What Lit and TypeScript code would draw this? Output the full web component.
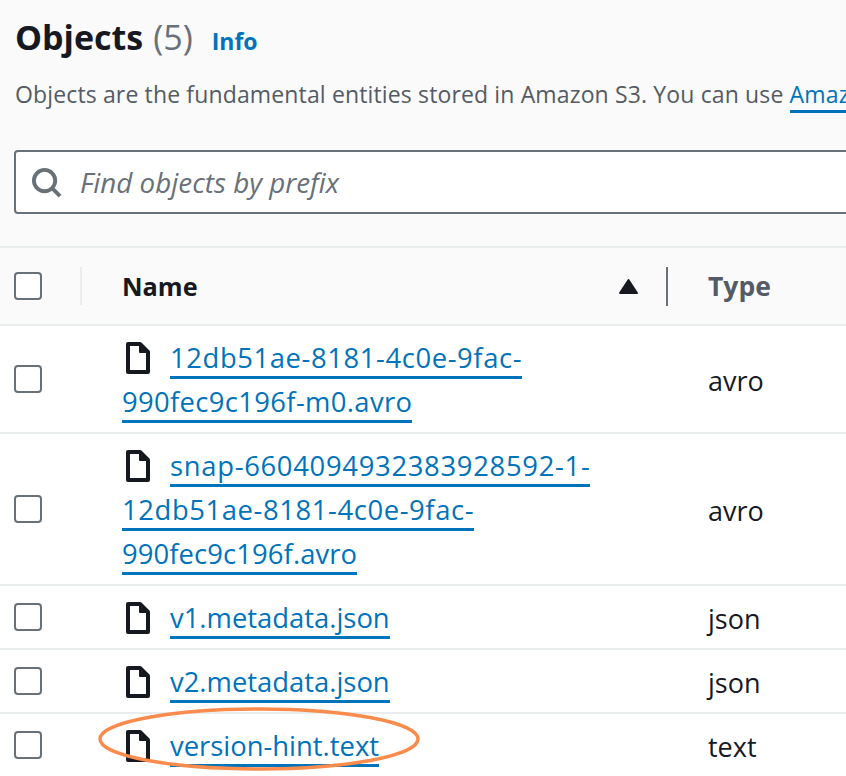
import {LitElement, html, css} from 'lit';
import {customElement} from 'lit/decorators.js';

// the screenshot's digits run wider than Open Sans, so digit heavy lines get a bit of tracking
const rows = [
  {lines: [['12db51ae-8181-4c0e-9fac-', 0.6], ['990fec9c196f-m0.avro', 0.35]], type: 'avro'},
  {lines: [['snap-6604094932383928592-1-', 0.7], ['12db51ae-8181-4c0e-9fac-', 0.6], ['990fec9c196f.avro', 0.1]], type: 'avro'},
  {lines: [['v1.metadata.json', 0]], type: 'json'},
  {lines: [['v2.metadata.json', 0]], type: 'json'},
  {lines: [['version-hint.text', 0]], type: 'text'},
];

const fileIcon = html`<svg class="file" viewBox="0 0 24 32" width="24" height="32">
  <path d="M2 2h12l8 8v20H2z" fill="#fff" stroke="#16191f" stroke-width="4" stroke-linejoin="round"></path>
  <path d="M14 2l8 8h-8z" fill="#16191f" stroke="#16191f" stroke-width="2" stroke-linejoin="round"></path>
</svg>`;

@customElement('app-root')
export class AppRoot extends LitElement {
  static styles = css`
    :host {
      display: block;
      position: relative;
      height: 776px;
      overflow: hidden;
      background: #fafafa;
      font-family: 'Open Sans', 'Noto Sans', sans-serif;
      color: #16191f;
    }
    .head {
      padding: 12px 0 0 15px;
      white-space: nowrap;
    }
    h1 {
      margin: 0;
      font-size: 34px;
      line-height: 50px;
      font-weight: 700;
      display: flex;
      align-items: baseline;
    }
    .count {
      color: #687078;
      font-weight: 400;
      margin-left: 10px;
    }
    .info {
      color: #0073bb;
      font-size: 23px;
      font-weight: 700;
      margin-left: 19px;
    }
    .desc {
      margin: 8px 0 0;
      color: #545b64;
      font-size: 23px;
      line-height: 40px;
      letter-spacing: 0.14px;
    }
    .desc a {
      color: #0073bb;
      text-decoration: none;
      border-bottom: 3px solid #0073bb;
    }
    .search {
      margin: 36px -20px 0 14px;
      height: 64px;
      box-sizing: border-box;
      border: 2px solid #687078;
      border-radius: 4px;
      background: #fff;
      display: flex;
      align-items: center;
      padding-left: 15px;
      gap: 18px;
      color: #687078;
      font-size: 27.8px;
      font-style: italic;
    }
    .table {
      margin-top: 32px;
      border-top: 2px solid #eaeded;
    }
    .row {
      display: grid;
      grid-template-columns: 122px 546px 1fr;
      border-bottom: 2px solid #eaeded;
      background: #fff;
    }
    .row.th {
      background: #fafafa;
      box-sizing: border-box;
      height: 78px;
      font-weight: 700;
      font-size: 25.3px;
    }
    .cell {
      display: flex;
      align-items: center;
      position: relative;
    }
    .check {
      padding-left: 14px;
    }
    .box {
      width: 28px;
      height: 28px;
      box-sizing: border-box;
      border: 2px solid #687078;
      border-radius: 4px;
      background: #fff;
    }
    .th .check::after {
      content: '';
      position: absolute;
      left: 80px;
      top: 19px;
      width: 2px;
      height: 38px;
      background: #eaeded;
    }
    .sort {
      justify-content: space-between;
      border-right: 2px solid #687078;
      height: 39px;
      align-self: center;
      padding-right: 27px;
      box-sizing: border-box;
    }
    .type-h {
      color: #545b64;
      font-size: 26.5px;
      padding-left: 40px;
    }
    .name {
      padding: 10px 0 8px;
      font-size: 27.4px;
      line-height: 44px;
    }
    .line {
      display: block;
    }
    .line.first {
      display: flex;
      align-items: center;
    }
    .file {
      margin: 0 20px 0 4px;
      flex: none;
      width: 24px;
      height: 32px;
    }
    .name a {
      color: #0073bb;
      text-decoration: none;
      border-bottom: 3px solid #0073bb;
    }
    .type {
      padding: 2px 0 0 40px;
      font-size: 27px;
    }
    .ring {
      position: absolute;
      left: 98px;
      top: 704px;
      pointer-events: none;
    }
  `;

  render() {
    return html`
      <div class="head">
        <h1>Objects<span class="count">(5)</span><span class="info">Info</span></h1>
        <p class="desc">Objects are the fundamental entities stored in Amazon S3. You can use <a>Amazon S3 inventory</a></p>
      </div>
      <div class="search">
        <svg viewBox="0 0 32 32" width="31" height="31" fill="none" stroke="#687078" stroke-width="4">
          <circle cx="14" cy="14" r="11"></circle>
          <path d="M22 22l8 8"></path>
        </svg>
        <span>Find objects by prefix</span>
      </div>
      <div class="table">
        <div class="row th">
          <div class="cell check"><span class="box"></span></div>
          <div class="cell sort">
            <span>Name</span>
            <svg viewBox="0 0 22 18" width="21" height="17">
              <path d="M11 2l9 14H2z" fill="#16191f" stroke="#16191f" stroke-width="2" stroke-linejoin="round"></path>
            </svg>
          </div>
          <div class="cell type-h">Type</div>
        </div>
        ${rows.map(
          (r) => html`<div class="row">
            <div class="cell check"><span class="box"></span></div>
            <div class="name">
              ${r.lines.map(([l, track], i) =>
                i === 0
                  ? html`<div class="line first">${fileIcon}<span><a style="letter-spacing:${track}px">${l}</a></span></div>`
                  : html`<div class="line"><a style="letter-spacing:${track}px">${l}</a></div>`
              )}
            </div>
            <div class="cell type">${r.type}</div>
          </div>`
        )}
      </div>
      <svg class="ring" width="324" height="70" viewBox="0 0 324 70" fill="none">
        <ellipse cx="161" cy="35" rx="159" ry="30" stroke="#f98c4d" stroke-width="3.5"></ellipse>
      </svg>
    `;
  }
}
